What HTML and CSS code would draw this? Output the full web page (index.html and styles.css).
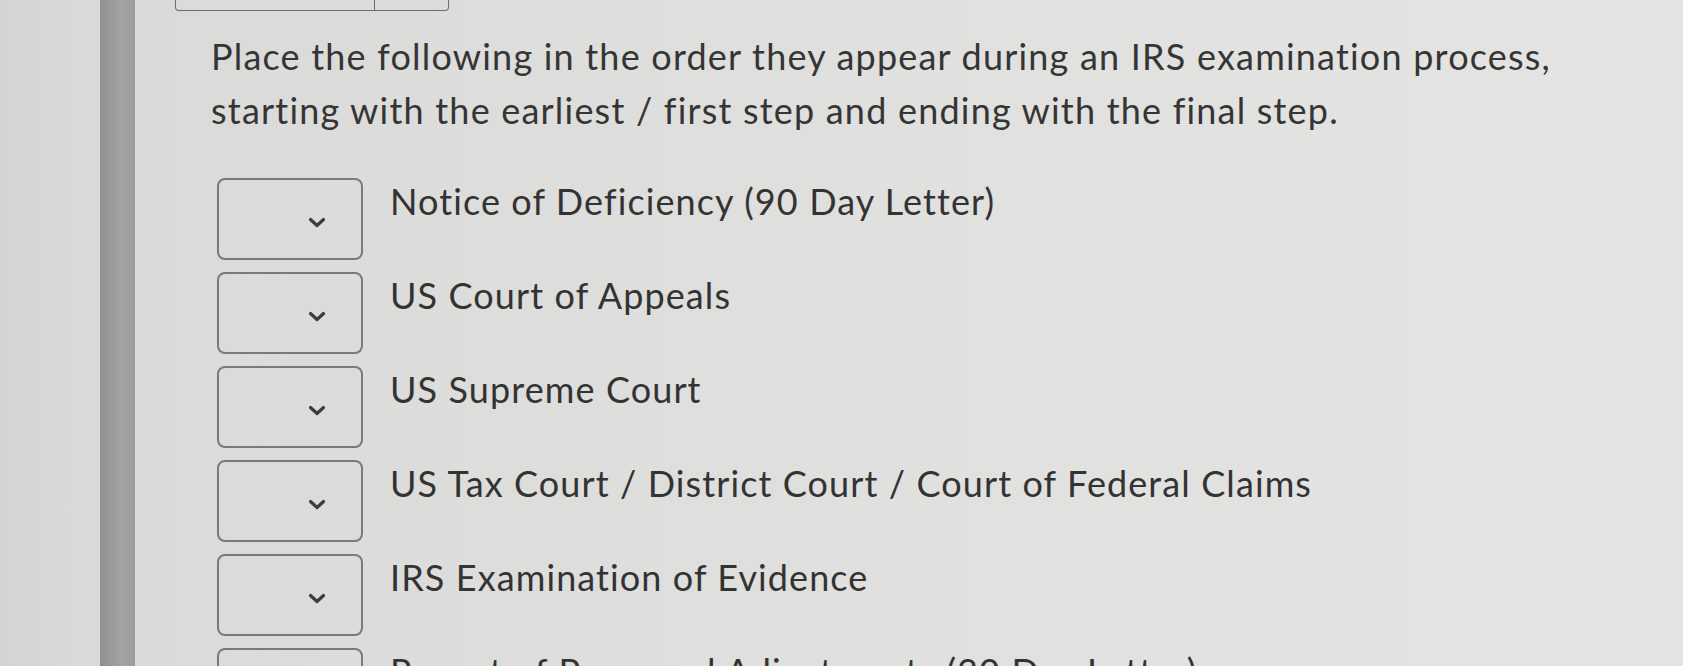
FILE: index.html
```html
<!DOCTYPE html>
<html lang="en">
<head>
  <meta charset="UTF-8">
  <meta name="viewport" content="width=device-width, initial-scale=1.0">
  <title>Ordering Question</title>
  <link rel="stylesheet" href="styles.css">
</head>
<body>
  <div class="page">
    <div class="side"></div>
    <div class="rail"></div>
    <main class="main">
      <div class="tabs">
        <div class="tab wide"></div>
        <div class="tab"></div>
      </div>

      <p class="question">Place the following in the order they appear during an IRS examination process, starting with the earliest / first step and ending with the final step.</p>

      <div class="items">
        <div class="item">
          <div class="pick"><svg class="chev" viewBox="0 0 18 11"><path d="M2.5 2.5 L9 8.5 L15.5 2.5"/></svg></div>
          <span class="label">Notice of Deficiency (90 Day Letter)</span>
        </div>
        <div class="item">
          <div class="pick"><svg class="chev" viewBox="0 0 18 11"><path d="M2.5 2.5 L9 8.5 L15.5 2.5"/></svg></div>
          <span class="label">US Court of Appeals</span>
        </div>
        <div class="item">
          <div class="pick"><svg class="chev" viewBox="0 0 18 11"><path d="M2.5 2.5 L9 8.5 L15.5 2.5"/></svg></div>
          <span class="label">US Supreme Court</span>
        </div>
        <div class="item">
          <div class="pick"><svg class="chev" viewBox="0 0 18 11"><path d="M2.5 2.5 L9 8.5 L15.5 2.5"/></svg></div>
          <span class="label">US Tax Court / District Court / Court of Federal Claims</span>
        </div>
        <div class="item">
          <div class="pick"><svg class="chev" viewBox="0 0 18 11"><path d="M2.5 2.5 L9 8.5 L15.5 2.5"/></svg></div>
          <span class="label">IRS Examination of Evidence</span>
        </div>
        <div class="item">
          <div class="pick"><svg class="chev" viewBox="0 0 18 11"><path d="M2.5 2.5 L9 8.5 L15.5 2.5"/></svg></div>
          <span class="label">Report of Proposed Adjustments (30 Day Letter)</span>
        </div>
      </div>
    </main>
  </div>
</body>
</html>
```

FILE: styles.css
```css
body {
  margin: 0;
  height: 666px;
  overflow: hidden;
  font-family: Lato, 'Open Sans', sans-serif;
  color: #333;
}
.page {
  display: flex;
  height: 666px;
}
.side {
  width: 100px;
  background: linear-gradient(90deg, #d4d4d2, #dadad8);
}
.rail {
  width: 35px;
  background: linear-gradient(90deg, #8f8f8e, #a4a4a2 60%, #9c9c9a);
}
.main {
  flex: 1;
  padding-left: 76px;
  overflow: hidden;
  background: linear-gradient(90deg, #dadad8, #e0e0de 50%, #e4e4e2);
}
.tabs {
  display: flex;
  margin-left: -36px;
  height: 11px;
}
.tab {
  width: 73px;
  border: 1px solid #6d6d6d;
  border-top: none;
}
.tab.wide {
  width: 198px;
  border-right: none;
  border-bottom-left-radius: 4px;
}
.tab:last-child {
  border-bottom-right-radius: 4px;
}
.question {
  margin: 18px 0 0;
  font-size: 36px;
  line-height: 54px;
  letter-spacing: 1.2px;
  max-width: 1380px;
  color: #353535;
}
.items {
  margin-top: 41px;
  margin-left: 6px;
  display: flex;
  flex-direction: column;
  gap: 12px;
}
.item {
  display: flex;
  align-items: flex-start;
  gap: 27px;
}
.pick {
  width: 146px;
  height: 82px;
  flex-shrink: 0;
  box-sizing: border-box;
  border: 2px solid #7a7a7a;
  border-radius: 8px;
  display: flex;
  align-items: center;
  justify-content: flex-end;
  padding-right: 35px;
}
.chev {
  width: 18px;
  height: 11px;
  margin-top: 6px;
  fill: none;
  stroke: #3c3c3c;
  stroke-width: 3.2;
  stroke-linecap: round;
  stroke-linejoin: round;
}
.label {
  font-size: 36px;
  line-height: 40px;
  letter-spacing: 1.1px;
  padding-top: 3px;
  white-space: nowrap;
  color: #333;
}
```
